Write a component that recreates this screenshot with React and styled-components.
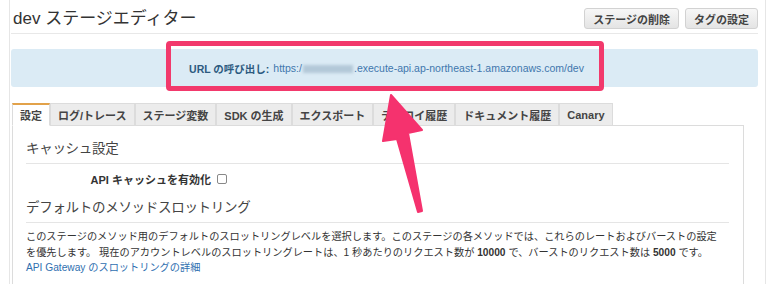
import React from 'react';
import styled, { createGlobalStyle } from 'styled-components';

const GlobalStyle = createGlobalStyle`
    body {
        margin: 0;
        background: #fff;
        font-family: "Liberation Sans", "Noto Sans CJK JP", sans-serif;
        color: #333;
    }
`;

const Root = styled.div`
    position: relative;
    width: 768px;
    height: 284px;
    overflow: hidden;
`;

const Page = styled.div`
    box-sizing: border-box;
    margin-left: 9px;
    width: 757px;
    height: 284px;
    border-left: 1px solid #e6e6e6;
    border-right: 1px solid #e6e6e6;
    padding: 0 7px 0 1px;
`;

const Header = styled.div`
    box-sizing: border-box;
    display: flex;
    align-items: center;
    justify-content: space-between;
    height: 34px;
    padding: 8px 0 4px 2px;
    border-bottom: 1px solid #e8e8e8;
`;

const Title = styled.h1`
    margin: 0;
    font-size: 17px;
    font-weight: 400;
    color: #333;
    line-height: 20px;
`;

const HeaderBtns = styled.div`
    display: flex;
    gap: 6px;
`;

const GrayBtn = styled.button`
    height: 21px;
    padding: 0 8px;
    font-family: "Liberation Sans", "Noto Sans CJK JP", sans-serif;
    font-size: 11px;
    font-weight: 700;
    color: #444;
    border: 1px solid #d2d2d2;
    border-radius: 3px;
    background: linear-gradient(#f7f7f7, #e4e4e4);
`;

const InfoBar = styled.div`
    position: relative;
    margin-top: 15px;
    height: 38px;
    display: flex;
    align-items: center;
    justify-content: center;
    background: #dbebf5;
    border-radius: 3px;
    font-size: 10.5px;
    padding-left: 4px;
`;

const InfoLabel = styled.b`
    color: #2d5a80;
    margin-right: 4px;
`;

const InfoUrl = styled.span`
    color: #3f77ad;
`;

const Blur = styled.span`
    display: inline-block;
    width: 50px;
    height: 8px;
    margin: 0 1px;
    vertical-align: middle;
    background: #b3c8d8;
    filter: blur(1.5px);
`;

const Highlight = styled.div`
    position: absolute;
    box-sizing: border-box;
    left: 155px;
    top: -8px;
    width: 438px;
    height: 50px;
    border: 5px solid #f2396c;
    border-radius: 4px;
`;

const TabRow = styled.div`
    display: flex;
    margin: 16px 0 0 1px;
`;

const Tab = styled.div`
    box-sizing: border-box;
    height: 23px;
    display: flex;
    align-items: center;
    padding: 0 7px;
    font-size: 11px;
    font-weight: 700;
    color: #444;
    background: ${p => (p.active ? '#fff' : '#ececec')};
    border: 1px solid #dcdcdc;
    border-top: ${p => (p.active ? '2px solid #e2a24a' : '1px solid #dcdcdc')};
    border-bottom: ${p => (p.active ? '1px solid #fff' : '1px solid #dcdcdc')};
    margin-bottom: -1px;
`;

const Panel = styled.div`
    box-sizing: border-box;
    margin-left: 1px;
    width: 732px;
    height: 200px;
    border: 1px solid #dcdcdc;
    padding: 13px 14px 0 13px;
`;

const SectionTitle = styled.h2`
    margin: ${p => p.gap || 0}px 0 0;
    padding-bottom: 4px;
    border-bottom: 1px solid #e5e5e5;
    font-size: 13.5px;
    letter-spacing: -0.3px;
    font-weight: 400;
    color: #444;
    line-height: 20px;
`;

const FieldRow = styled.div`
    display: flex;
    align-items: center;
    gap: 6px;
    margin-top: 7px;
    height: 16px;
`;

const FieldLabel = styled.label`
    width: 185px;
    text-align: right;
    font-size: 11px;
    font-weight: 700;
    color: #333;
`;

const Check = styled.span`
    box-sizing: border-box;
    width: 10px;
    height: 10px;
    border: 1px solid #888;
    border-radius: 2px;
    background: #fff;
`;

const Desc = styled.p`
    margin: 6px 0 0;
    font-size: 10.2px;
    line-height: 15.5px;
    white-space: nowrap;
    color: #333;
`;

const Link = styled.a`
    color: #2f6fb0;
    text-decoration: none;
`;

const ArrowLayer = styled.svg`
    position: absolute;
    left: 0;
    top: 0;
    pointer-events: none;
`;

const tabs = ['設定', 'ログ/トレース', 'ステージ変数', 'SDK の生成', 'エクスポート', 'デプロイ履歴', 'ドキュメント履歴', 'Canary'];

const App = () => {
    return (
        <Root>
            <GlobalStyle />
            <Page>
                <Header>
                    <Title>dev ステージエディター</Title>
                    <HeaderBtns>
                        <GrayBtn>ステージの削除</GrayBtn>
                        <GrayBtn>タグの設定</GrayBtn>
                    </HeaderBtns>
                </Header>
                <InfoBar>
                    <InfoLabel>URL の呼び出し:</InfoLabel>
                    <InfoUrl>https:/<Blur />.execute-api.ap-northeast-1.amazonaws.com/dev</InfoUrl>
                    <Highlight />
                </InfoBar>
                <TabRow>
                    {tabs.map((t, i) => (
                        <Tab key={t} active={i === 0}>{t}</Tab>
                    ))}
                </TabRow>
                <Panel>
                    <SectionTitle>キャッシュ設定</SectionTitle>
                    <FieldRow>
                        <FieldLabel>API キャッシュを有効化</FieldLabel>
                        <Check />
                    </FieldRow>
                    <SectionTitle gap={11}>デフォルトのメソッドスロットリング</SectionTitle>
                    <Desc>
                        このステージのメソッド用のデフォルトのスロットリングレベルを選択します。このステージの各メソッドでは、これらのレートおよびバーストの設定<br />
                        を優先します。 現在のアカウントレベルのスロットリングレートは、1 秒あたりのリクエスト数が <b>10000</b> で、バーストのリクエスト数は <b>5000</b> です。<br />
                        <Link href="#">API Gateway のスロットリングの詳細</Link>
                    </Desc>
                </Panel>
            </Page>
            <ArrowLayer width="768" height="284" viewBox="0 0 768 284">
                <polygon
                    points="391,95 422,130 408,133 422,211 418,212 397,139 383,141"
                    fill="#f5326e"
                    stroke="#f5326e"
                    strokeWidth="2"
                    strokeLinejoin="round"
                />
            </ArrowLayer>
        </Root>
    );
};

export default App;
